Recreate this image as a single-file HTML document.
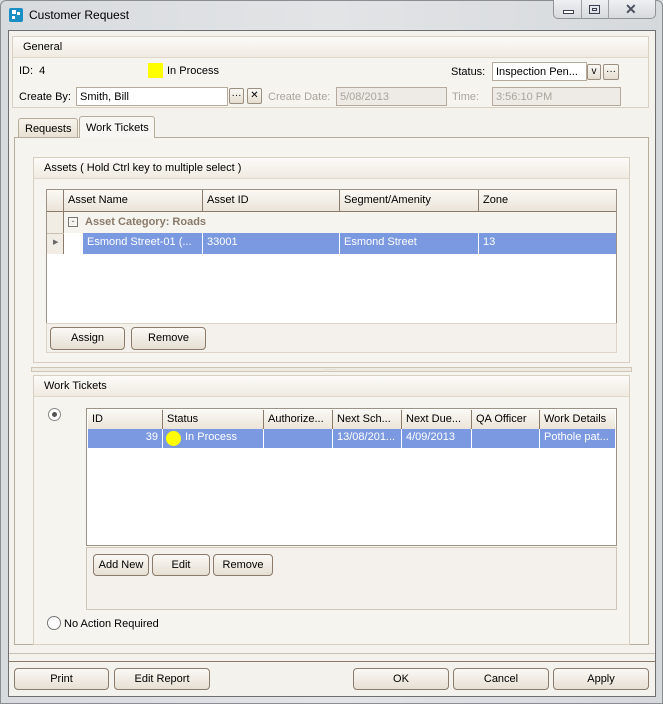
<!DOCTYPE html>
<html><head><style>
*{box-sizing:border-box;margin:0;padding:0}
body{width:663px;height:704px;position:relative;overflow:hidden;background:#d9dcdf;font-family:"Liberation Sans",sans-serif;font-size:11px;color:#000}
.a{position:absolute;white-space:nowrap}
.btn{position:absolute;border:1px solid #8c7b6b;border-radius:4px;background:linear-gradient(#fbf9f5,#e6dfd3);text-align:center;font-size:11px}
.grp{position:absolute;border:1px solid #d8cfc0;background:#f6f4ef}
.gh{position:absolute;left:0;right:0;top:0;height:21px;background:linear-gradient(#fcfbf8,#f0ebe1);border-bottom:1px solid #e0d8c9;padding:4px 10px}
.inp{position:absolute;border:1px solid #b6ab9b;background:#fff;padding:3px 3px;height:19px;white-space:nowrap}
.dis{background:#eeebe6;color:#a9a49c}
.sb{position:absolute;border:1px solid #9c8f80;border-radius:2px;background:linear-gradient(#fbf9f5,#e4ddd1);text-align:center;font-size:10px;line-height:14px}
.th{position:absolute;top:0;height:100%;border-right:1px solid #8c7b6b;padding:4px 4px;white-space:nowrap;overflow:hidden}
.td{position:absolute;top:0;height:100%;border-right:1px solid #fff;padding:3px 4px;color:#fff;white-space:nowrap;overflow:hidden}
</style></head><body>
<div class="a" style="left:0;top:0;width:663px;height:704px;border:1px solid #8a8d91;border-radius:6px 6px 0 0;background:linear-gradient(90deg,#d8dbde,#e2e4e6 50%,#d6d9dc)"></div>
<div class="a" style="left:9px;top:8px;width:14px;height:14px;background:#1a8fc4;border-radius:2px"></div>
<div class="a" style="left:12px;top:10px;width:4px;height:4px;background:#fff"></div><div class="a" style="left:17px;top:12px;width:3px;height:3px;background:#fff"></div><div class="a" style="left:12px;top:16px;width:3px;height:3px;background:#fff"></div>
<div class="a" style="left:29px;top:8px;font-size:12px">Customer Request</div>
<div class="a" style="left:553px;top:0;width:103px;height:19px;border:1px solid #8f949a;border-top:none;border-radius:0 0 5px 5px;background:linear-gradient(#eef0f2,#d7dade)"></div>
<div class="a" style="left:581px;top:0;width:1px;height:19px;background:#9aa0a6"></div><div class="a" style="left:608px;top:0;width:1px;height:19px;background:#9aa0a6"></div>
<div class="a" style="left:563px;top:10px;width:11px;height:4px;border:1px solid #3a4050;background:#fff"></div>
<div class="a" style="left:589px;top:5px;width:11px;height:9px;border:1px solid #3a4050"></div><div class="a" style="left:592px;top:8px;width:5px;height:3px;border:1px solid #3a4050"></div>
<div class="a" style="left:625px;top:1px;font-size:14px;color:#4a5060;font-weight:bold">✕</div>
<div class="a" style="left:8px;top:30px;width:648px;height:667px;border:1px solid #6f6f6f;background:#f4f2ed"></div>

<div class="grp" style="left:12px;top:36px;width:637px;height:72px"><div class="gh">General</div></div>
<div class="a" style="left:19px;top:65px">ID:&nbsp; 4</div>
<div class="a" style="left:148px;top:63px;width:15px;height:15px;background:#ffff00"></div>
<div class="a" style="left:167px;top:65px">In Process</div>
<div class="a" style="left:451px;top:66px">Status:</div>
<div class="inp" style="left:492px;top:62px;width:95px">Inspection Pen...</div>
<div class="sb" style="left:587px;top:64px;width:14px;height:16px">v</div>
<div class="sb" style="left:603px;top:64px;width:16px;height:16px">···</div>
<div class="a" style="left:19px;top:91px">Create By:</div>
<div class="inp" style="left:76px;top:87px;width:152px">Smith, Bill</div>
<div class="sb" style="left:229px;top:88px;width:15px;height:16px">···</div>
<div class="sb" style="left:247px;top:88px;width:15px;height:16px">✕</div>
<div class="a" style="left:268px;top:91px;color:#a9a49c">Create Date:</div>
<div class="inp dis" style="left:336px;top:87px;width:111px">5/08/2013</div>
<div class="a" style="left:452px;top:91px;color:#a9a49c">Time:</div>
<div class="inp dis" style="left:492px;top:87px;width:129px">3:56:10 PM</div>

<div class="a" style="left:18px;top:118px;width:60px;height:20px;border:1px solid #b7ab99;border-bottom:none;border-radius:3px 3px 0 0;background:linear-gradient(#f7f3ec,#e8e0d2);padding:4px 6px">Requests</div>
<div class="a" style="left:14px;top:137px;width:635px;height:508px;border:1px solid #b7ab99;background:#f6f4ef"></div>
<div class="a" style="left:79px;top:116px;width:76px;height:22px;border:1px solid #b7ab99;border-bottom:none;border-radius:3px 3px 0 0;background:#f8f6f2;padding:5px 6px">Work Tickets</div>

<div class="grp" style="left:33px;top:157px;width:597px;height:206px"><div class="gh" style="padding-left:10px">Assets ( Hold Ctrl key to multiple select )</div></div>
<div class="a" style="left:46px;top:189px;width:571px;height:135px;border:1px solid #9e9284;background:#fff"></div>
<div class="a" style="left:47px;top:190px;width:569px;height:22px;background:linear-gradient(#fbf9f5,#ebe4d8);border-bottom:1px solid #8c7b6b"></div>
<div class="th" style="left:47px;top:190px;height:22px;width:17px"></div>
<div class="th" style="left:64px;top:190px;height:22px;width:139px">Asset Name</div>
<div class="th" style="left:203px;top:190px;height:22px;width:137px">Asset ID</div>
<div class="th" style="left:340px;top:190px;height:22px;width:139px">Segment/Amenity</div>
<div class="th" style="left:479px;top:190px;height:22px;width:137px;border:none">Zone</div>
<div class="a" style="left:47px;top:212px;width:17px;height:42px;background:#f1ede5;border-right:1px solid #8c7b6b"></div>
<div class="a" style="left:47px;top:233px;width:17px;height:1px;background:#c8bfb0"></div>
<div class="a" style="left:53px;top:238px;font-size:7px;color:#666">▶</div>
<div class="a" style="left:64px;top:212px;width:552px;height:21px;background:#f6f4ef"></div>
<div class="a" style="left:68px;top:217px;width:10px;height:10px;border:1px solid #777;font-size:9px;line-height:7px;text-align:center;color:#555">-</div>
<div class="a" style="left:85px;top:216px;font-weight:bold;color:#8a7a6a">Asset Category: Roads</div>
<div class="a" style="left:83px;top:233px;width:533px;height:21px;background:#7b99e0"></div>
<div class="td" style="left:83px;top:233px;height:21px;width:120px">Esmond Street-01 (...</div>
<div class="td" style="left:203px;top:233px;height:21px;width:137px">33001</div>
<div class="td" style="left:340px;top:233px;height:21px;width:139px">Esmond Street</div>
<div class="td" style="left:479px;top:233px;height:21px;width:137px;border:none">13</div>
<div class="a" style="left:46px;top:323px;width:571px;height:30px;border:1px solid #ddd5c7;background:#f4f1ec"></div>
<div class="btn" style="left:50px;top:327px;width:75px;height:23px;line-height:21px">Assign</div>
<div class="btn" style="left:131px;top:327px;width:75px;height:23px;line-height:21px">Remove</div>
<div class="a" style="left:31px;top:367px;width:601px;height:5px;border:1px solid #cfc6b6;background:#efebe4"></div>
<div class="a" style="left:324px;top:367px;font-size:6px;color:#999;letter-spacing:1px">····</div>

<div class="grp" style="left:33px;top:375px;width:597px;height:270px"><div class="gh" style="padding-left:10px">Work Tickets</div></div>
<div class="a" style="left:48px;top:408px;width:13px;height:13px;border:1px solid #888;border-radius:50%;background:#fff"></div>
<div class="a" style="left:52px;top:412px;width:5px;height:5px;border-radius:50%;background:#555"></div>
<div class="a" style="left:86px;top:408px;width:531px;height:138px;border:1px solid #9e9284;background:#fff"></div>
<div class="a" style="left:88px;top:410px;width:527px;height:19px;background:linear-gradient(#fbf9f5,#ebe4d8)"></div>
<div class="th" style="left:88px;top:410px;height:19px;width:75px;padding-top:3px">ID</div>
<div class="th" style="left:163px;top:410px;height:19px;width:101px;padding-top:3px">Status</div>
<div class="th" style="left:264px;top:410px;height:19px;width:69px;padding-top:3px">Authorize...</div>
<div class="th" style="left:333px;top:410px;height:19px;width:69px;padding-top:3px">Next Sch...</div>
<div class="th" style="left:402px;top:410px;height:19px;width:70px;padding-top:3px">Next Due...</div>
<div class="th" style="left:472px;top:410px;height:19px;width:68px;padding-top:3px">QA Officer</div>
<div class="th" style="left:540px;top:410px;height:19px;width:75px;padding-top:3px;border:none">Work Details</div>
<div class="a" style="left:88px;top:429px;width:527px;height:19px;background:#7b99e0"></div>
<div class="td" style="left:88px;top:429px;height:19px;width:75px;text-align:right;padding-top:2px">39</div>
<div class="td" style="left:163px;top:429px;height:19px;width:101px;padding:2px 0 0 22px">In Process</div>
<div class="a" style="left:166px;top:431px;width:15px;height:15px;border-radius:50%;background:#ffff00"></div>
<div class="td" style="left:264px;top:429px;height:19px;width:69px"></div>
<div class="td" style="left:333px;top:429px;height:19px;width:69px;padding-top:2px">13/08/201...</div>
<div class="td" style="left:402px;top:429px;height:19px;width:70px;padding-top:2px">4/09/2013</div>
<div class="td" style="left:472px;top:429px;height:19px;width:68px"></div>
<div class="td" style="left:540px;top:429px;height:19px;width:75px;padding-top:2px;border:none">Pothole pat...</div>
<div class="a" style="left:86px;top:547px;width:531px;height:63px;border:1px solid #cfc6b6;background:#f4f1ec"></div>
<div class="btn" style="left:93px;top:554px;width:56px;height:22px;line-height:20px">Add New</div>
<div class="btn" style="left:152px;top:554px;width:58px;height:22px;line-height:20px">Edit</div>
<div class="btn" style="left:213px;top:554px;width:60px;height:22px;line-height:20px">Remove</div>
<div class="a" style="left:47px;top:616px;width:14px;height:14px;border:1px solid #777;border-radius:50%;background:#fff"></div>
<div class="a" style="left:64px;top:618px">No Action Required</div>

<div class="a" style="left:9px;top:653px;width:646px;height:1px;background:#c9c1b3"></div>
<div class="a" style="left:9px;top:661px;width:646px;height:1px;background:#8c7b6b"></div>
<div class="btn" style="left:14px;top:668px;width:95px;height:22px;line-height:20px">Print</div>
<div class="btn" style="left:114px;top:668px;width:96px;height:22px;line-height:20px">Edit Report</div>
<div class="btn" style="left:353px;top:668px;width:96px;height:22px;line-height:20px">OK</div>
<div class="btn" style="left:453px;top:668px;width:96px;height:22px;line-height:20px">Cancel</div>
<div class="btn" style="left:553px;top:668px;width:96px;height:22px;line-height:20px">Apply</div>
</body></html>
